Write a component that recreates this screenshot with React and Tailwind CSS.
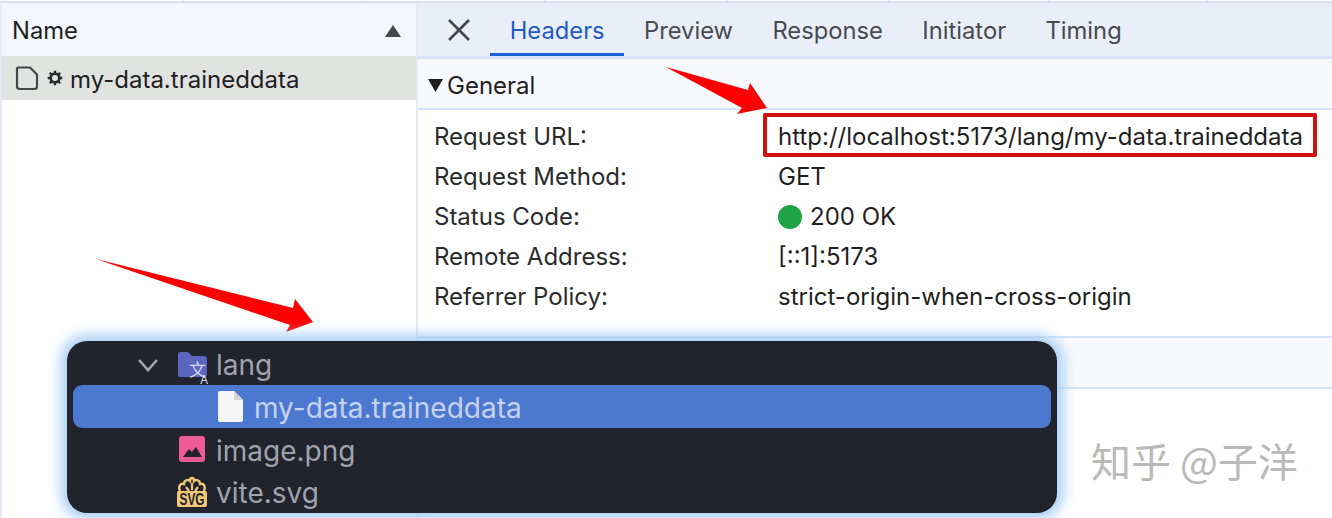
import React from "react";

const F = { fontFamily: 'Inter, "Noto Sans", sans-serif' };

function Tab({ children, active }) {
  return (
    <div className={"relative h-full px-[19.7px] flex items-center text-[23.75px] pt-[2px] " + (active ? "text-[#1f5bc0]" : "text-[#474a50]")}>
      {children}
      {active && <div className="absolute left-0 right-0 bottom-0 h-[3px] bg-[#1b63d2]" />}
    </div>
  );
}

function Row({ label, children }) {
  return (
    <div className="flex items-center h-10 text-[24px] text-[#1f1f1f]">
      <div className="w-[344px] text-[#2a2b2d]">{label}</div>
      <div className="flex items-center">{children}</div>
    </div>
  );
}

function Arrow({ className, w, h, points }) {
  return (
    <svg className={className} width={w} height={h} viewBox={`0 0 ${w} ${h}`}>
      <polygon points={points} fill="#fb0000" />
    </svg>
  );
}

export default function App() {
  return (
    <div style={F} className="relative w-[1332px] h-[518px] overflow-hidden bg-white">
      <div className="h-[3px] border-b-2 border-[#d6e0f2] flex relative">
        <div className="w-[184px] border-r border-[#d6e0f2]" />
        <div className="w-[182px] border-r border-[#d6e0f2]" />
        <div className="w-[179px] border-r border-[#d6e0f2]" />
        <div className="w-[183px] border-r border-[#d6e0f2]" />
        <div className="w-[161px] border-r border-[#d6e0f2]" />
        <div className="w-[160px] border-r border-[#d6e0f2]" />
        <div className="w-[159px] border-r border-[#d6e0f2]" />
      </div>
      <div className="flex h-[515px]">
        <div className="w-[418px] shrink-0 border-l-2 border-r-2 border-[#e6ebf5]">
          <div className="h-[53px] bg-[#f3f6fd] flex items-center justify-between pl-[10px] pr-[15px] pt-[2px] text-[24px] text-[#1f1f1f]">
            <span className="text-[23.75px]">Name</span>
            <svg width="16" height="12" viewBox="0 0 16 12"><polygon points="8,0 16,12 0,12" fill="#44474a" /></svg>
          </div>
          <div className="h-[44px] bg-[#e1e3e1] flex items-center pl-[13px] text-[24px] text-[#1f1f1f]">
            <svg width="24" height="26" viewBox="0 0 24 26" fill="none" stroke="#44474a" strokeWidth="2.2" strokeLinejoin="round">
              <path d="M3 2.5 H15 L22 9.5 V21.5 Q22 24 19.5 24 H5 Q2 24 2 21.5 V4 Q2 2.5 3 2.5 Z" />
            </svg>
            <svg className="ml-[8px] mr-[7px]" width="16" height="16" viewBox="0 0 24 24" fill="none" stroke="#2a2b2d" strokeWidth="4">
              <circle cx="12" cy="12" r="6.5" />
              <path d="M12 1v4M12 19v4M1 12h4M19 12h4M4.2 4.2l2.8 2.8M17 17l2.8 2.8M4.2 19.8L7 17M17 7l2.8-2.8" strokeWidth="3.5" />
            </svg>
            <span className="mt-[3px]">my-data.traineddata</span>
          </div>
        </div>
        <div className="flex-1 min-w-0">
          <div className="h-[53px] bg-[#e9eef8] flex items-center pl-[29px]">
            <svg className="mr-[19px]" width="24" height="24" viewBox="0 0 24 24" fill="none" stroke="#44474a" strokeWidth="2.6">
              <path d="M2 2 L22 22 M22 2 L2 22" />
            </svg>
            <Tab active>Headers</Tab>
            <Tab>Preview</Tab>
            <Tab>Response</Tab>
            <Tab>Initiator</Tab>
            <Tab>Timing</Tab>
          </div>
          <div className="h-[3px] bg-[#d5e2f7]" />
          <div className="h-[51px] bg-[#f8f9fd] border-b-2 border-[#d5e2f7] flex items-center pl-[10px] pt-[4px] text-[24px] text-[#1f1f1f]">
            <svg className="mr-[5px]" width="15" height="13" viewBox="0 0 15 13"><polygon points="0,0 15,0 7.5,13" fill="#1f1f1f" /></svg>
            <span className="-ml-[1px]">General</span>
          </div>
          <div className="pl-[16px] pt-[7px] h-[226px]">
            <Row label="Request URL:">http://localhost:5173/lang/my-data.traineddata</Row>
            <Row label="Request Method:">GET</Row>
            <Row label="Status Code:">
              <span className="w-6 h-6 rounded-full bg-[#1ea446] mr-[8px]" />200 OK
            </Row>
            <Row label="Remote Address:">[::1]:5173</Row>
            <Row label="Referrer Policy:">strict-origin-when-cross-origin</Row>
          </div>
          <div className="h-[53px] bg-[#f8f9fd] border-y-2 border-[#d5e2f7]" />
        </div>
      </div>

      {/* annotations over the screenshot */}
      <div className="absolute left-[763px] top-[113px] w-[554px] h-[44px] border-[4px] border-[#d0120f] rounded-[2px]" />
      <Arrow className="absolute left-[664px] top-[66px]" w={104} h={50} points="2,1 84,24 86,17 103,42 73,48 78,42" />
      <Arrow className="absolute left-[95px] top-[258px]" w={222} h={76} points="1,1 198,50 200,41 218,64 191,74 195,67" />

      {/* file tree panel */}
      <div className="absolute left-[67px] top-[341px] w-[990px] h-[172px] rounded-[20px] bg-[#21242c] shadow-[0_0_14px_6px_#a3cdf4] text-[28px] text-[#9fa3ad] overflow-hidden">
        <div className="h-[44px] relative">
          <svg className="absolute left-[70px] top-[17px]" width="22" height="14" viewBox="0 0 22 14" fill="none" stroke="#a3a6ae" strokeWidth="2.6"><path d="M2 2 L11 12 L20 2" /></svg>
          <svg className="absolute left-[110px] top-[10px] overflow-visible" width="32" height="32" viewBox="0 0 32 32">
            <path d="M1 4 Q1 1 3 1 H11 L15 5 H27 Q30 5 30 8 V23 Q30 26 27 26 H3 Q1 26 1 23 Z" fill="#5a66bd" />
            <text x="12" y="25" fontSize="17" fill="#d3d9f0" fontFamily="Noto Sans CJK SC, sans-serif">文</text>
            <text x="23" y="33" fontSize="12" fill="#d6dbee" fontFamily="Inter, sans-serif">A</text>
          </svg>
          <span className="absolute left-[149px] top-[3px]">lang</span>
        </div>
        <div className="mx-[6px] h-[43px] rounded-[9px] bg-[#4d78cf] relative text-[#c5d2ef]">
          <svg className="absolute left-[145px] top-[6px]" width="25" height="31" viewBox="0 0 25 31">
            <path d="M2 0 H16 L25 9 V29 Q25 31 23 31 H2 Q0 31 0 29 V2 Q0 0 2 0 Z" fill="#f5f5f5" />
            <path d="M16 0 L25 9 H16 Z" fill="#d5d5d5" />
          </svg>
          <span className="absolute left-[181px] top-[2px]">my-data.traineddata</span>
        </div>
        <div className="h-[43px] relative">
          <svg className="absolute left-[112px] top-[8px]" width="26" height="26" viewBox="0 0 26 26">
            <rect width="26" height="26" rx="3" fill="#ee5a93" />
            <path d="M4 21 L10 13 L13 16 L17 11 L23 21 Z" fill="#21242c" />
          </svg>
          <span className="absolute left-[149px] top-[2px]">image.png</span>
        </div>
        <div className="h-[42px] relative">
          <svg className="absolute left-[110px] top-[6px] overflow-visible" width="30" height="30" viewBox="0 0 30 30">
            <path
              d="M3 14 C1 10 3 6 7 7 C7 3 11 2 13 4 C13 0 17 0 17 4 C19 2 23 3 23 7 C27 6 29 10 27 14"
              fill="none"
              stroke="#f3c778"
              strokeWidth="2.4"
            />
            <path d="M15 6 V13 M9 10 L12 14 M21 10 L18 14" stroke="#f3c778" strokeWidth="2.2" />
            <rect x="0" y="14" width="30" height="16" rx="2" fill="#f3c778" />
            <text x="15" y="28" textAnchor="middle" fontSize="16" fontWeight="700" fill="#21242c" fontFamily="Liberation Sans, sans-serif" textLength="25" lengthAdjust="spacingAndGlyphs">SVG</text>
          </svg>
          <span className="absolute left-[149px] top-[1px]">vite.svg</span>
        </div>
      </div>

      <div
        className="absolute left-[1091px] top-[436px] text-[40px] leading-[48px] text-[#b9b9b9] whitespace-nowrap"
        style={{ fontFamily: '"Noto Sans CJK SC", sans-serif' }}
      >
        知乎 @子洋
      </div>
    </div>
  );
}
